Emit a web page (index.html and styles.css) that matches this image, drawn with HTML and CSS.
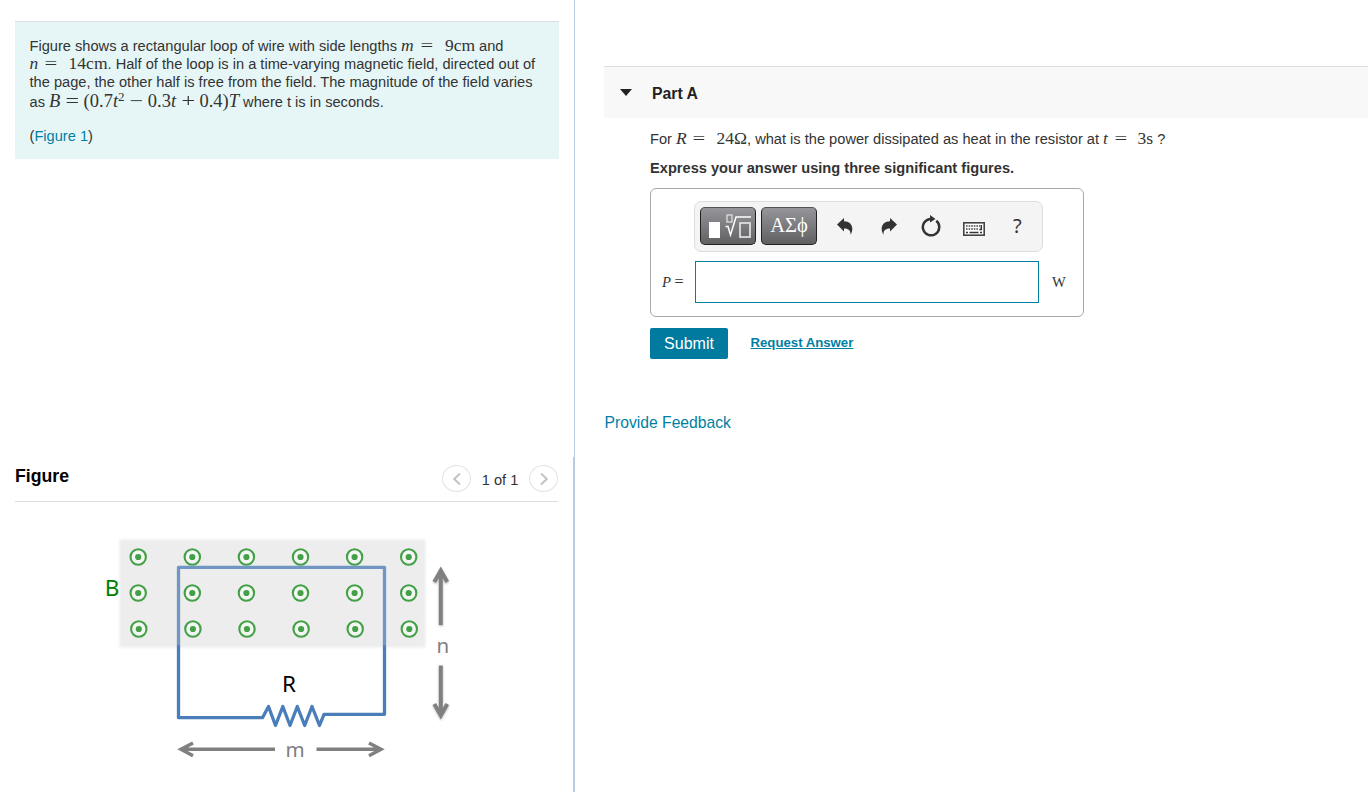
FILE: index.html
```html
<!DOCTYPE html>
<html lang="en">
<head>
    <meta charset="UTF-8">
    <meta name="viewport" content="width=device-width, initial-scale=1.0">
    <title>Part A</title>
    <link rel="stylesheet" href="styles.css">
</head>
<body>
    <div class="page">
        <div class="left">
            <div class="top-pane">
                <div class="problem">
                    <p>Figure shows a rectangular loop of wire with side lengths <span class="math math-m"><i>m</i><span class="eq">=</span><span>9cm</span></span> and</p>
                    <p><span class="math math-n"><i>n</i><span class="eq">=</span><span>14cm</span></span>. Half of the loop is in a time-varying magnetic field, directed out of</p>
                    <p>the page, the other half is free from the field. The magnitude of the field varies</p>
                    <p class="formula">as <span class="math math-b"><i>B</i><span class="op">=</span><span>(0.7<i>t</i><sup>2</sup></span><span class="op">−</span><span>0.3<i>t</i></span><span class="op">+</span><span>0.4)<i>T</i></span></span> where t is in seconds.</p>
                    <p class="figure-ref">(<a href="#figure">Figure 1</a>)</p>
                </div>
            </div>
            <div class="figure-pane" id="figure">
                <div class="figure-header">
                    <h3>Figure</h3>
                    <div class="pager">
                        <button class="pager-btn"><svg width="8" height="14" viewBox="0 0 8 14"><path d="M7 1.5L1.2 7 7 12.5"/></svg></button>
                        <span>1 of 1</span>
                        <button class="pager-btn"><svg width="8" height="14" viewBox="0 0 8 14"><path d="M1 1.5L6.8 7 1 12.5"/></svg></button>
                    </div>
                </div>
                <svg class="diagram" width="370" height="240" viewBox="95 530 370 240">
                    <defs>
                        <filter id="soft" x="-5%" y="-10%" width="110%" height="120%"><feGaussianBlur stdDeviation="1"/></filter>
                        <filter id="shadow" x="-50%" y="-20%" width="200%" height="140%"><feDropShadow dx="0" dy="1" stdDeviation="1" flood-opacity=".3"/></filter>
                        <g id="dot"><circle r="7.7" fill="#f3f6f2" stroke="#43a047" stroke-width="2.1"/><circle r="3.1" fill="#43a047"/></g>
                    </defs>
                    <rect x="119.5" y="539.5" width="306" height="108" fill="#ededed" filter="url(#soft)"/>
                    <!-- field pointing out of the page -->
                    <g>
                        <use href="#dot" x="138.2" y="557"/><use href="#dot" x="192.3" y="557"/><use href="#dot" x="246.4" y="557"/><use href="#dot" x="300.5" y="557"/><use href="#dot" x="354.6" y="557"/><use href="#dot" x="408.7" y="557"/>
                        <use href="#dot" x="138.2" y="593"/><use href="#dot" x="192.3" y="593"/><use href="#dot" x="246.4" y="593"/><use href="#dot" x="300.5" y="593"/><use href="#dot" x="354.6" y="593"/><use href="#dot" x="408.7" y="593"/>
                        <use href="#dot" x="138.8" y="629"/><use href="#dot" x="192.9" y="629"/><use href="#dot" x="247" y="629"/><use href="#dot" x="301.1" y="629"/><use href="#dot" x="355.2" y="629"/><use href="#dot" x="409.3" y="629"/>
                    </g>
                    <!-- wire loop -->
                    <g fill="none" stroke-width="3.3" stroke-linejoin="round">
                        <path d="M178.5 646V567.3H384.5V646" stroke="#7096c4"/>
                        <path d="M178.5 645.5V717.7H262.5L268.5 706.5 275.5 725.5 282.8 706.5 290 725.5 297.3 706.5 304.7 725.5 312 706.5 319.5 725.5 324 714.3H384.5V645.5" stroke="#4a7ebb"/>
                    </g>
                    <g fill="none" stroke="#808080" stroke-width="3.5">
                        <path d="M275 749.3H182M193 743L181 749.3 193 755.7"/>
                        <path d="M316.5 749.3H380M369 743L381 749.3 369 755.7"/>
                        <g stroke-width="4" filter="url(#shadow)">
                            <path d="M440.8 625V571M434.3 582L440.8 570.5 447.3 582"/>
                            <path d="M440.8 665.5V715M434.3 704L440.8 715.5 447.3 704"/>
                        </g>
                    </g>
                    <g class="labels">
                        <text class="big" x="104.8" y="595.5" fill="#008000">B</text>
                        <text class="big" x="282" y="692" fill="#000">R</text>
                        <text x="285.5" y="756.5" fill="#808080">m</text>
                        <text x="436.5" y="653" fill="#808080">n</text>
                    </g>
                </svg>
            </div>
        </div>

        <div class="right">
            <div class="part-header">
                <span class="caret"></span>
                <h2>Part A</h2>
            </div>
            <div class="part-body">
                <p class="question">For <span class="math math-r"><i>R</i><span class="eq">=</span><span>24Ω</span></span>, what is the power dissipated as heat in the resistor at <span class="math math-t"><i>t</i><span class="eq">=</span><span>3s</span></span> ?</p>
                <p class="instructions">Express your answer using three significant figures.</p>
                <div class="answer-box">
                    <div class="toolbar">
                        <button class="tool-btn">
                            <svg width="54" height="36" viewBox="0 0 54 36">
                                <rect x="8" y="14" width="11" height="16" fill="#fff"/>
                                <g fill="none" stroke="#ddd" stroke-width="1.3">
                                    <rect x="26" y="7" width="5" height="7"/>
                                    <path d="M24.5 18.5H27L29.5 27 35 9H50" stroke="#fff" stroke-width="1.5"/>
                                    <rect x="39" y="15" width="10" height="14" stroke-width="1.8"/>
                                </g>
                            </svg>
                        </button>
                        <button class="tool-btn greek">ΑΣϕ</button>
                        <svg class="tool-icon undo" width="16" height="18" viewBox="0 0 16 18"><path d="M0 6.5L7 0v3.200C13.500 3 18 9 13.500 17 14 12 11 10.500 7 10.500V13.500z"/></svg>
                        <svg class="tool-icon redo" width="16" height="18" viewBox="0 0 16 18"><path d="M16 6.5L9 0v3.200C2.500 3-2 9 2.500 17 2 12 5 10.500 9 10.500V13.500z"/></svg>
                        <svg class="tool-icon reset" width="20" height="22" viewBox="0 0 20 22"><path d="M15.300 5.800A8.200 8.200 0 1 1 10 3.900" fill="none" stroke="#333" stroke-width="2.5"/><path d="M9 0L14.500 4 9 7.500z"/></svg>
                        <svg class="tool-icon keyboard" width="22" height="14" viewBox="0 0 22 14"><rect x=".8" y=".8" width="20.4" height="12.4" fill="#fff" stroke="#444" stroke-width="1.6"/><path d="M3 4h14M3 7h13" fill="none" stroke="#444" stroke-width="1.4" stroke-dasharray="1.6 1"/><path d="M3 10.500h2M6.500 10.500h9M17 10.500h2M18.300 3v4.500h-2" fill="none" stroke="#333" stroke-width="1.5"/></svg>
                        <span class="help">?</span>
                    </div>
                    <div class="answer-row">
                        <label for="answer"><i>P</i> <span>=</span></label>
                        <input type="text" id="answer">
                        <span class="unit">W</span>
                    </div>
                </div>
                <div class="actions">
                    <button class="submit">Submit</button>
                    <a href="#" class="request">Request Answer</a>
                </div>
            </div>
            <a href="#" class="feedback">Provide Feedback</a>
        </div>
    </div>
</body>
</html>
```
FILE: styles.css
```css
* {
    box-sizing: border-box;
}

body {
    margin: 0;
    font-family: Arial, "Liberation Sans", sans-serif;
    font-size: 14.64px;
    color: #333;
    background: #fff;
}

p, h2, h3 {
    margin: 0;
}

a {
    color: #007fa3;
    text-decoration: none;
}

button {
    font-family: inherit;
    padding: 0;
    cursor: pointer;
}

.page {
    display: flex;
    height: 792px;
    overflow: hidden;
}

.left {
    width: 575px;
    flex: none;
}

.top-pane {
    height: 457px;
    padding: 21px 15px 0;
    border-right: 1px solid #b9cbe0;
}

.problem {
    height: 138px;
    padding: 15px 14px 0 14.5px;
    background: #e6f6f7;
    border-top: 1px solid #d8dfe0;
    white-space: nowrap;
}

.problem p {
    height: 18px;
    line-height: 18px;
}

.problem .formula {
    height: 20px;
    line-height: 22px;
}

.problem .figure-ref {
    margin-top: 16px;
}

/* inline math */
.math {
    display: inline-flex;
    align-items: baseline;
    font-family: "Liberation Serif", serif;
    font-size: 17.5px;
    line-height: 16px;
    white-space: nowrap;
}

.math sup {
    font-size: 13px;
    line-height: 0;
    vertical-align: 6px;
}

/* wider operators */
.math .eq,
.math .op {
    transform: scaleX(1.3);
}

.math .eq {
    margin: 0 auto 0 8px;
}

.math-m {
    width: 74px;
}

.math-n {
    width: 78px;
}

.math-b {
    justify-content: space-between;
    width: 190px;
    font-size: 18.5px;
}

.math-r {
    width: 71px;
}

.math-r .eq {
    margin-left: 7px;
}

.math-t {
    width: 50px;
}

/* figure */
.figure-pane {
    width: 575px;
    height: 335px;
    padding: 0 15px;
    border-right: 2px solid #b9cbe0;
}

.figure-header {
    display: flex;
    justify-content: space-between;
    height: 45px;
    padding-top: 8px;
    border-bottom: 1px solid #ddd;
}

.figure-header h3 {
    font-size: 17.7px;
    line-height: 22px;
    color: #000;
}

.pager {
    display: flex;
    width: 116px;
    height: 27px;
    justify-content: space-between;
    align-items: center;
    line-height: 29px;
}

.pager span {
    padding-top: 3px;
}

.pager-btn {
    display: flex;
    align-items: center;
    justify-content: center;
    width: 29px;
    height: 27px;
    background: #fff;
    border: 1px solid #e3e3e3;
    border-radius: 50%;
}

.pager-btn path {
    fill: none;
    stroke: #c3c3c3;
    stroke-width: 2;
}

.diagram {
    display: block;
    margin: 28px 0 0 80px;
}

.labels {
    font-family: "Noto Sans", sans-serif;
    font-size: 20.5px;
}

.labels .big {
    font-size: 22.5px;
}

/* question */
.right {
    flex: 1;
    padding: 66px 0 0 29px;
}

.part-header {
    display: flex;
    align-items: center;
    height: 52px;
    padding-left: 16px;
    background: #f8f8f8;
    border-top: 1px solid #ddd;
}

.part-header h2 {
    margin-left: 20px;
    padding-top: 2px;
    font-size: 15.8px;
    color: #222;
}

.caret {
    border: 6px solid transparent;
    border-top: 7px solid #222;
    border-bottom: 0;
}

.part-body {
    padding: 12px 0 0 46px;
}

.question {
    height: 18px;
    line-height: 18px;
}

.instructions {
    margin-top: 11px;
    height: 18px;
    line-height: 18px;
    font-weight: bold;
}

.answer-box {
    width: 434px;
    height: 129px;
    margin-top: 11px;
    padding: 12px 0 0 11px;
    border: 1px solid #aaa;
    border-radius: 6px;
}

.toolbar {
    display: flex;
    align-items: center;
    width: 349px;
    height: 51px;
    margin-left: 32px;
    padding: 0 5px;
    background: #f4f4f4;
    border: 1px solid #ddd;
    border-radius: 7px;
}

.tool-btn {
    width: 56px;
    height: 38px;
    margin: -2px 5px 0 0;
    color: #fff;
    background: linear-gradient(#96959a, #606062);
    border: 1px solid #222;
    border-top-color: #555;
    border-radius: 5px;
}

.greek {
    font-family: "Liberation Serif", serif;
    font-size: 20.5px;
}

.tool-icon {
    flex: none;
    fill: #333;
}

.undo {
    margin-left: 15px;
}

.redo {
    margin-left: 28px;
}

.reset {
    margin: -2px 0 0 24px;
}

.keyboard {
    margin: 4px 0 0 22px;
}

.help {
    margin: -2px 0 0 28px;
    font-family: "Noto Sans", sans-serif;
    font-size: 20px;
}

.answer-row {
    display: flex;
    align-items: center;
    margin-top: 9px;
    font-family: "Liberation Serif", serif;
}

.answer-row label {
    width: 33px;
}

.answer-row label span {
    font-size: 16px;
}

.answer-row input {
    width: 344px;
    height: 42px;
    border: 1px solid #007fa3;
}

.unit {
    margin-left: 13px;
}

.actions {
    display: flex;
    align-items: center;
    margin-top: 11px;
}

.submit {
    width: 78px;
    height: 31px;
    color: #fff;
    font-size: 16px;
    background: #007a9f;
    border: 0;
    border-radius: 2px;
}

.request {
    margin: -2px 0 0 22.5px;
    font-size: 13.2px;
    font-weight: bold;
    text-decoration: underline;
}

.feedback {
    display: inline-block;
    margin: 55px 0 0 .5px;
    font-size: 15.7px;
}
```
